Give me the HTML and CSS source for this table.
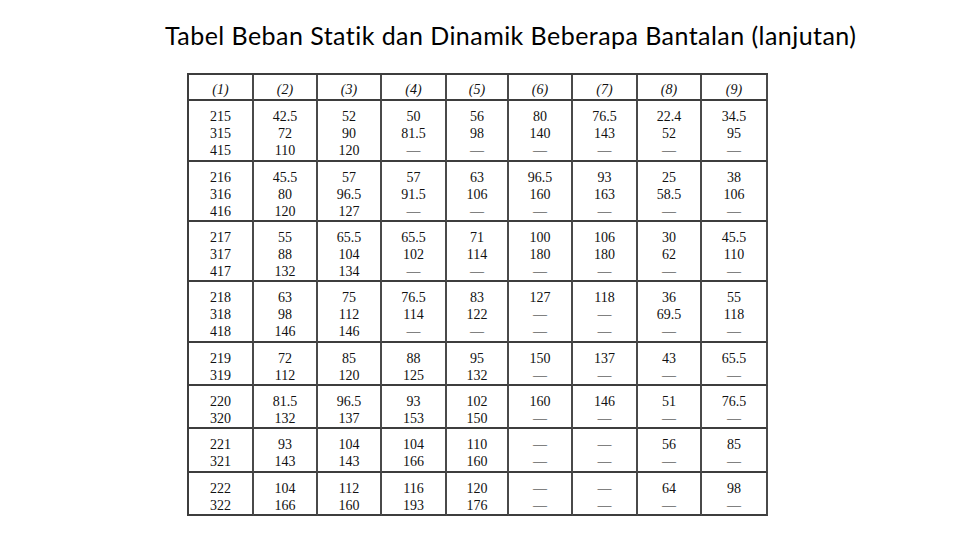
FILE: index.html
```html
<!DOCTYPE html>
<html lang="id">
<head>
<meta charset="utf-8">
<title>Tabel Beban Statik dan Dinamik</title>
<link rel="stylesheet" href="styles.css">
</head>
<body>
<h1 class="title">Tabel Beban Statik dan Dinamik Beberapa Bantalan (lanjutan)</h1>
<div class="tbl">
  <div class="cell head">(1)</div><div class="cell head">(2)</div><div class="cell head">(3)</div><div class="cell head">(4)</div><div class="cell head">(5)</div><div class="cell head">(6)</div><div class="cell head">(7)</div><div class="cell head">(8)</div><div class="cell head">(9)</div>

  <div class="cell">215<br>315<br>415</div><div class="cell">42.5<br>72<br>110</div><div class="cell">52<br>90<br>120</div><div class="cell">50<br>81.5<br>—</div><div class="cell">56<br>98<br>—</div><div class="cell">80<br>140<br>—</div><div class="cell">76.5<br>143<br>—</div><div class="cell">22.4<br>52<br>—</div><div class="cell">34.5<br>95<br>—</div>

  <div class="cell">216<br>316<br>416</div><div class="cell">45.5<br>80<br>120</div><div class="cell">57<br>96.5<br>127</div><div class="cell">57<br>91.5<br>—</div><div class="cell">63<br>106<br>—</div><div class="cell">96.5<br>160<br>—</div><div class="cell">93<br>163<br>—</div><div class="cell">25<br>58.5<br>—</div><div class="cell">38<br>106<br>—</div>

  <div class="cell">217<br>317<br>417</div><div class="cell">55<br>88<br>132</div><div class="cell">65.5<br>104<br>134</div><div class="cell">65.5<br>102<br>—</div><div class="cell">71<br>114<br>—</div><div class="cell">100<br>180<br>—</div><div class="cell">106<br>180<br>—</div><div class="cell">30<br>62<br>—</div><div class="cell">45.5<br>110<br>—</div>

  <div class="cell">218<br>318<br>418</div><div class="cell">63<br>98<br>146</div><div class="cell">75<br>112<br>146</div><div class="cell">76.5<br>114<br>—</div><div class="cell">83<br>122<br>—</div><div class="cell">127<br>—<br>—</div><div class="cell">118<br>—<br>—</div><div class="cell">36<br>69.5<br>—</div><div class="cell">55<br>118<br>—</div>

  <div class="cell">219<br>319</div><div class="cell">72<br>112</div><div class="cell">85<br>120</div><div class="cell">88<br>125</div><div class="cell">95<br>132</div><div class="cell">150<br>—</div><div class="cell">137<br>—</div><div class="cell">43<br>—</div><div class="cell">65.5<br>—</div>

  <div class="cell">220<br>320</div><div class="cell">81.5<br>132</div><div class="cell">96.5<br>137</div><div class="cell">93<br>153</div><div class="cell">102<br>150</div><div class="cell">160<br>—</div><div class="cell">146<br>—</div><div class="cell">51<br>—</div><div class="cell">76.5<br>—</div>

  <div class="cell">221<br>321</div><div class="cell">93<br>143</div><div class="cell">104<br>143</div><div class="cell">104<br>166</div><div class="cell">110<br>160</div><div class="cell">—<br>—</div><div class="cell">—<br>—</div><div class="cell">56<br>—</div><div class="cell">85<br>—</div>

  <div class="cell">222<br>322</div><div class="cell">104<br>166</div><div class="cell">112<br>160</div><div class="cell">116<br>193</div><div class="cell">120<br>176</div><div class="cell">—<br>—</div><div class="cell">—<br>—</div><div class="cell">64<br>—</div><div class="cell">98<br>—</div>
</div>
</body>
</html>
```

FILE: styles.css
```css
html, body {
  margin: 0;
  padding: 0;
  background: #ffffff;
}

body {
  width: 960px;
  height: 540px;
  overflow: hidden;
}

.title {
  margin: 20px 0 0 165px;
  font-family: Lato, "Open Sans", sans-serif;
  font-weight: 400;
  font-size: 25px;
  letter-spacing: 0.45px;
  font-variant-ligatures: none;
  line-height: 30px;
  color: #000;
  white-space: nowrap;
}

.tbl {
  display: grid;
  grid-template-columns: 65px 64px 64px 65px 62px 64px 65px 64px 66px;
  grid-template-rows: 26px 61px 60px 60px 61px 43px 43px 44px 43px;
  width: max-content;
  margin: 23px 0 0 187px;
  border-top: 2px solid #3d3d3d;
  border-left: 2px solid #3d3d3d;
  font-family: "Liberation Serif", "Times New Roman", serif;
  font-size: 14px;
  line-height: 17px;
  color: #111;
}

.cell {
  box-sizing: border-box;
  border-right: 2px solid #4a4a4a;
  border-bottom: 2px solid #3d3d3d;
  padding-top: 7px;
  text-align: center;
}

.head {
  padding-top: 6px;
  font-style: italic;
}
```
